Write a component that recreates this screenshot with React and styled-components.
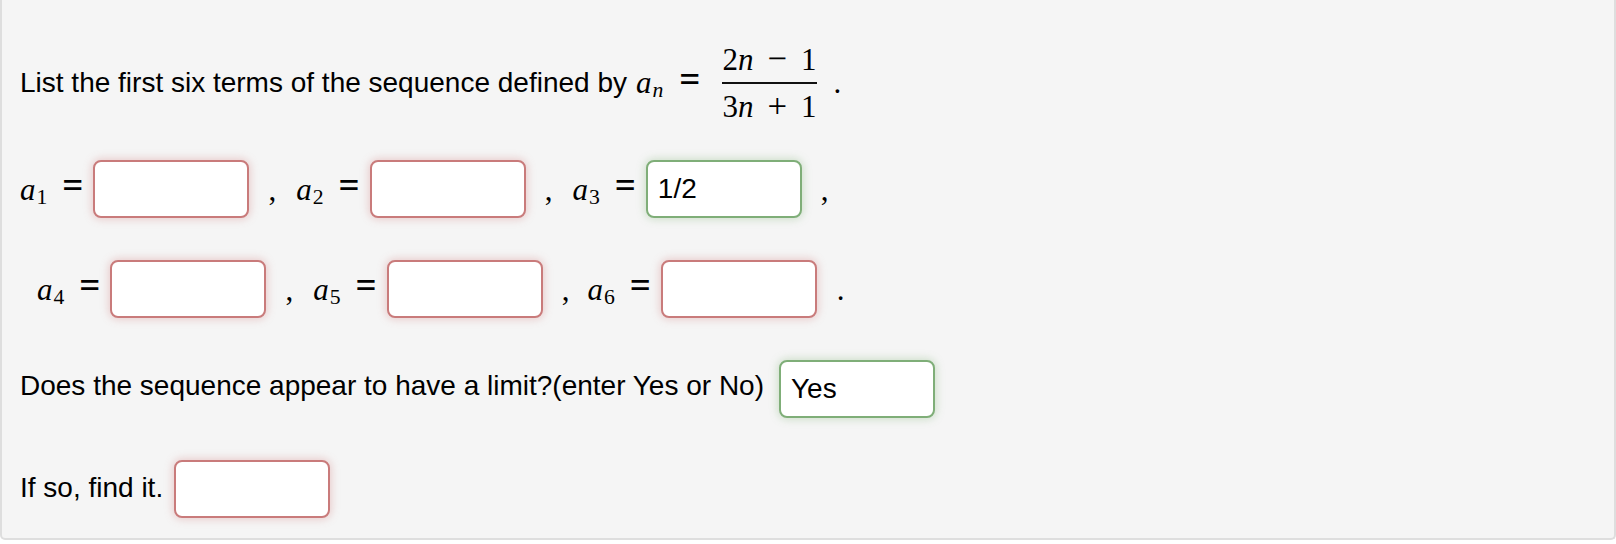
import React from 'react';
import styled, { createGlobalStyle } from 'styled-components';

const Global = createGlobalStyle`
  html, body { margin: 0; padding: 0; background: #ffffff; }
  body { font-family: "Liberation Sans", Arial, Helvetica, sans-serif; color: #000; }
  * { box-sizing: border-box; }
`;

const Panel = styled.section`
  width: 1616px;
  height: 540px;
  background: #f5f5f5;
  border: 2px solid #dedede;
  border-top: none;
  border-radius: 0 0 5px 5px;
  padding: 44px 0 0 18px;
  display: flex;
  flex-direction: column;
  gap: 42px;
`;

const PromptRow = styled.div`
  display: flex;
  align-items: center;
  height: 77px;
  margin-bottom: -3px;
`;

const MathRow = styled.div`
  display: flex;
  align-items: center;
  height: 58px;
  padding-left: ${p => p.$indent || 0}px;
`;

const QuestionRow = styled.div`
  display: flex;
  align-items: center;
  height: 58px;
`;

const Text = styled.span`
  font-size: 28px;
  line-height: normal;
  white-space: nowrap;
  margin-right: ${p => p.$gap || 0}px;
  margin-bottom: ${p => p.$lift || 0}px;
`;

const Var = styled.span`
  font-family: "Liberation Serif", "Times New Roman", serif;
  font-style: italic;
  font-size: 31px;
  line-height: 1;
  white-space: nowrap;
  margin-left: ${p => p.$lead || 0}px;
  margin-top: ${p => p.$drop || 0}px;
`;

const Sub = styled.span`
  font-size: 0.7em;
  line-height: 1;
  font-style: ${p => (p.$italic ? 'italic' : 'normal')};
  vertical-align: -0.17em;
  margin-left: 1px;
`;

const Eq = styled.span`
  font-family: "Liberation Serif", "Times New Roman", serif;
  font-size: 37px;
  font-weight: 700;
  line-height: 1;
  margin: 0 ${p => (p.$wide ? 19 : 10)}px 7px ${p => (p.$wide ? 16 : 15)}px;
`;

const Punct = styled.span`
  font-family: "Liberation Serif", "Times New Roman", serif;
  font-size: 31px;
  line-height: 1;
  margin-left: ${p => p.$before || 19}px;
  margin-right: ${p => p.$after || 0}px;
`;

const Fraction = styled.span`
  display: inline-flex;
  flex-direction: column;
  align-items: center;
  padding: 0 3px;
  font-family: "Liberation Serif", "Times New Roman", serif;
  font-size: 31px;
  line-height: 1;
`;

const Num = styled.span`
  padding-bottom: 7px;
  white-space: nowrap;
`;

const Den = styled.span`
  padding-top: 6px;
  white-space: nowrap;
`;

const Bar = styled.span`
  align-self: stretch;
  height: 2px;
  background: #111;
`;

const Ital = styled.span`
  font-style: italic;
`;

const Op = styled.span`
  font-size: 1.12em;
  line-height: 0.9;
  margin: 0 14px;
`;

const AnswerBox = styled.input`
  flex: none;
  width: 156px;
  height: 58px;
  border: 2px solid ${p => (p.$ok ? '#7fae78' : '#c97b7b')};
  border-radius: 8px;
  background: #ffffff;
  box-shadow: 0 0 8px 1px ${p => (p.$ok ? 'rgba(120, 175, 110, 0.35)' : 'rgba(205, 115, 115, 0.35)')};
  font-family: "Liberation Sans", Arial, Helvetica, sans-serif;
  font-size: 28px;
  color: #000;
  padding: 0 10px;
  outline: none;
  margin: 0;
`;

const Term = ({ sub, value, ok }) => (
  <>
    <Var $drop={5}>
      a<Sub>{sub}</Sub>
    </Var>
    <Eq>=</Eq>
    <AnswerBox type="text" readOnly value={value || ''} $ok={ok} />
  </>
);

export default function App() {
  return (
    <>
      <Global />
      <Panel>
        <PromptRow>
          <Text>List the first six terms of the sequence defined by</Text>
          <Var $lead={9} $drop={4}>
            a<Sub $italic>n</Sub>
          </Var>
          <Eq $wide>=</Eq>
          <Fraction>
            <Num>
              2<Ital>n</Ital>
              <Op>−</Op>1
            </Num>
            <Bar />
            <Den>
              3<Ital>n</Ital>
              <Op>+</Op>1
            </Den>
          </Fraction>
          <Punct $before={14}>.</Punct>
        </PromptRow>

        <MathRow>
          <Term sub="1" />
          <Punct $after={20}>,</Punct>
          <Term sub="2" />
          <Punct $after={20}>,</Punct>
          <Term sub="3" value="1/2" ok />
          <Punct>,</Punct>
        </MathRow>

        <MathRow $indent={17}>
          <Term sub="4" />
          <Punct $after={20}>,</Punct>
          <Term sub="5" />
          <Punct $before={19} $after={18}>,</Punct>
          <Term sub="6" />
          <Punct $before={20}>.</Punct>
        </MathRow>

        <QuestionRow>
          <Text $gap={15} $lift={6}>Does the sequence appear to have a limit?(enter Yes or No)</Text>
          <AnswerBox type="text" readOnly value="Yes" $ok />
        </QuestionRow>

        <QuestionRow>
          <Text $gap={11} $lift={3}>If so, find it.</Text>
          <AnswerBox type="text" readOnly value="" />
        </QuestionRow>
      </Panel>
    </>
  );
}
